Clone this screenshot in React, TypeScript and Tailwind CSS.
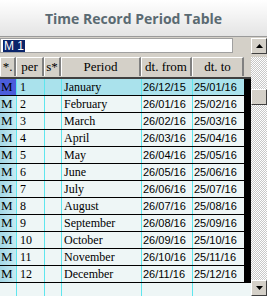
const rows = [
  ["1", "January", "26/12/15", "25/01/16"],
  ["2", "February", "26/01/16", "25/02/16"],
  ["3", "March", "26/02/16", "25/03/16"],
  ["4", "April", "26/03/16", "25/04/16"],
  ["5", "May", "26/04/16", "25/05/16"],
  ["6", "June", "26/05/16", "25/06/16"],
  ["7", "July", "26/06/16", "25/07/16"],
  ["8", "August", "26/07/16", "25/08/16"],
  ["9", "September", "26/08/16", "25/09/16"],
  ["10", "October", "26/09/16", "25/10/16"],
  ["11", "November", "26/10/16", "25/11/16"],
  ["12", "December", "26/11/16", "25/12/16"],
]

const serif = "font-['Liberation_Serif',serif]"

function HeaderCell({ w, label }: { w: string; label: string }) {
  return (
    <div
      className={`${w} h-full flex items-center justify-center bg-[#d4d0c8] border-t border-l border-t-white border-l-white border-r-2 border-r-[#808080] text-[13px] text-black ${serif}`}
    >
      {label}
    </div>
  )
}

function ScrollButton({ up }: { up?: boolean }) {
  return (
    <div className="w-[16px] h-[16px] bg-[#d4d0c8] border border-t-white border-l-white border-r-[#404040] border-b-[#404040] flex items-center justify-center">
      <svg width="7" height="4" viewBox="0 0 7 4">
        <path d={up ? "M0 4 L3.5 0 L7 4 Z" : "M0 0 L3.5 4 L7 0 Z"} fill="#000" />
      </svg>
    </div>
  )
}

export default function App() {
  return (
    <div className="w-[267px] h-[296px] overflow-hidden bg-[#d4d0c8] flex flex-col">
      {/* Title */}
      <div className="h-[37px] shrink-0 bg-gradient-to-b from-white to-[#e4e4e4] border-b border-[#9a9a9a] flex items-center justify-center">
        <span className="font-['Open_Sans',sans-serif] font-bold text-[14px] text-[#5a6a72]">
          Time Record Period Table
        </span>
      </div>

      {/* Search row */}
      <div className="h-[16px] mt-px flex shrink-0">
        <div className="w-[233px] h-[15px] bg-white border border-[#a0a0a0] flex items-center pl-[2px]">
          <span className="bg-[#0a246a] text-white text-[12px] leading-[12px] px-px font-['Liberation_Sans',sans-serif]">
            M 1
          </span>
        </div>
        <div className="w-[18px]" />
        <ScrollButton up />
      </div>

      <div className="flex flex-1 mt-[3px] min-h-0">
        {/* Table */}
        <div className="w-[251px] flex flex-col">
          <div className="h-[22px] flex border-b-2 border-[#404040] pb-px bg-[#d4d0c8]">
            <HeaderCell w="w-[16px]" label="*." />
            <HeaderCell w="w-[28px]" label="per" />
            <HeaderCell w="w-[17px]" label="s*" />
            <HeaderCell w="w-[80px]" label="Period" />
            <HeaderCell w="w-[51px]" label="dt. from" />
            <HeaderCell w="w-[52px]" label="dt. to" />
            <div className="w-[7px]" />
          </div>
          {rows.map((r, i) => {
            const sel = i === 0
            const bg = sel ? "bg-[#aae2ec]" : "bg-[#eef6f6]"
            return (
              <div key={r[0]} className={`h-[17px] flex border-b border-black ${bg} text-black`}>
                <div
                  className={`w-[16px] flex items-center pl-px text-[13px] ${serif} ${
                    sel ? "bg-[#4b5ddb]" : "bg-gradient-to-r from-[#a4d8e6] to-[#c4eaf2]"
                  }`}
                >
                  M
                </div>
                <div className={`w-[28px] border-l border-[#5ee6ee] flex items-center pl-[3px] text-[12px] ${serif}`}>
                  {r[0]}
                </div>
                <div className="w-[17px] border-l border-[#5ee6ee]" />
                <div className={`w-[80px] border-l border-[#5ee6ee] flex items-center pl-[2px] text-[12px] ${serif}`}>
                  {r[1]}
                </div>
                <div className="w-[51px] border-l border-[#5ee6ee] flex items-center pl-px text-[11px] font-['Liberation_Sans',sans-serif]">
                  {r[2]}
                </div>
                <div className="w-[52px] border-l border-[#5ee6ee] flex items-center pl-px text-[11px] font-['Liberation_Sans',sans-serif]">
                  {r[3]}
                </div>
                <div className="w-[7px] bg-black" />
              </div>
            )
          })}
          <div className="flex-1 flex bg-[#eef6f6]">
            <div className="w-[16px] bg-gradient-to-r from-[#a4d8e6] to-[#c4eaf2] opacity-0" />
            <div className="w-[28px] border-l border-[#5ee6ee]" />
            <div className="w-[17px] border-l border-[#5ee6ee]" />
            <div className="w-[80px] border-l border-[#5ee6ee]" />
            <div className="w-[51px] border-l border-[#5ee6ee]" />
            <div className="w-[52px] border-l border-[#5ee6ee]" />
          </div>
        </div>

        {/* Scrollbar */}
        <div className="w-[16px] flex flex-col bg-[repeating-conic-gradient(#c8c8c8_0_25%,#ffffff_0_50%)] bg-[length:2px_2px]">
          <div className="h-[32px]" />
          <div className="h-[16px] bg-[#d4d0c8] border border-t-white border-l-white border-r-[#404040] border-b-[#404040]" />
          <div className="flex-1" />
          <ScrollButton />
        </div>
      </div>
    </div>
  )
}
